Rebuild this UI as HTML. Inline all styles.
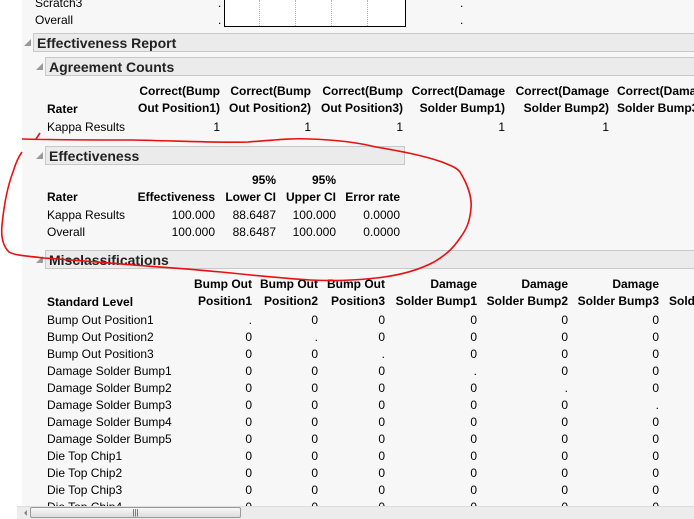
<!DOCTYPE html><html><head><style>
body{margin:0;width:694px;height:518px;overflow:hidden;background:#fff;font-family:"Liberation Sans",Arial,sans-serif;font-size:12px;color:#000;position:relative}
#bg{position:absolute;left:22px;top:0;width:672px;height:518px;background:#f7f7f7}
.a{position:absolute;white-space:nowrap;line-height:14px}
.h2{line-height:17px}
.b{font-weight:bold}
.r{text-align:right}
.hd{position:absolute;height:19px;background:#ebebeb;border:1px solid #c8c8c8;font-weight:bold;font-size:14px;line-height:19px;padding-left:3px;box-sizing:border-box;color:#222}
.tri{position:absolute;width:0;height:0;border-left:7px solid transparent;border-bottom:7px solid #999}
.c1,.c2,.c3,.c4,.c5,.c6{position:absolute;text-align:right;white-space:nowrap;line-height:14px}
.hr .c1,.hr .c2,.hr .c3,.hr .c4,.hr .c5,.hr .c6{line-height:17px}
.c1{right:442px}.c2{right:376px}.c3{right:309px}.c4{right:217px}.c5{right:126px}.c6{right:35px}
.row{position:absolute;left:0;width:694px;height:17px}
.row .l{position:absolute;left:47px;line-height:14px}
</style></head><body>
<div id="bg"></div>
<div class="a" style="left:35px;top:-4px">Scratch3</div>
<div class="a" style="left:35px;top:13px">Overall</div>
<div class="a" style="left:218px;top:-4px">.</div><div class="a" style="left:218px;top:13px">.</div>
<div class="a" style="left:460px;top:-4px">.</div><div class="a" style="left:460px;top:13px">.</div>
<div style="position:absolute;left:224px;top:-1px;width:180px;height:27px;border:1px solid #000;border-top:none;background:#fff"></div>
<div style="position:absolute;left:259px;top:0;height:26px;border-left:1px dotted #e0a0b0"></div>
<div style="position:absolute;left:295px;top:0;height:26px;border-left:1px dotted #e0a0b0"></div>
<div style="position:absolute;left:331px;top:0;height:26px;border-left:1px dotted #e0a0b0"></div>
<div style="position:absolute;left:367px;top:0;height:26px;border-left:1px dotted #e0a0b0"></div>

<div class="tri" style="left:24px;top:39px"></div>
<div class="hd" style="left:33px;top:33px;width:670px">Effectiveness Report</div>
<div class="tri" style="left:36px;top:63px"></div>
<div class="hd" style="left:45px;top:57px;width:660px">Agreement Counts</div>

<div class="a b" style="left:47px;top:102px">Rater</div>
<div class="a b r h2" style="right:474px;top:83px">Correct(Bump<br>Out Position1)</div>
<div class="a b r h2" style="right:383px;top:83px">Correct(Bump<br>Out Position2)</div>
<div class="a b r h2" style="right:291px;top:83px">Correct(Bump<br>Out Position3)</div>
<div class="a b r h2" style="right:189px;top:83px">Correct(Damage<br>Solder Bump1)</div>
<div class="a b r h2" style="right:85px;top:83px">Correct(Damage<br>Solder Bump2)</div>
<div class="a b h2" style="left:617px;top:83px">Correct(Damage<br>Solder Bump3)</div>
<div class="a" style="left:47px;top:120px">Kappa Results</div>
<div class="a r" style="right:474px;top:120px">1</div>
<div class="a r" style="right:383px;top:120px">1</div>
<div class="a r" style="right:291px;top:120px">1</div>
<div class="a r" style="right:189px;top:120px">1</div>
<div class="a r" style="right:85px;top:120px">1</div>

<div class="tri" style="left:36px;top:152px"></div>
<div class="hd" style="left:45px;top:146px;width:360px">Effectiveness</div>
<div class="a b r" style="right:418px;top:173px">95%</div>
<div class="a b r" style="right:358px;top:173px">95%</div>
<div class="a b" style="left:47px;top:190px">Rater</div>
<div class="a b r" style="right:479px;top:190px">Effectiveness</div>
<div class="a b r" style="right:418px;top:190px">Lower CI</div>
<div class="a b r" style="right:358px;top:190px">Upper CI</div>
<div class="a b r" style="right:294px;top:190px">Error rate</div>
<div class="a" style="left:47px;top:208px">Kappa Results</div>
<div class="a r" style="right:479px;top:208px">100.000</div>
<div class="a r" style="right:418px;top:208px">88.6487</div>
<div class="a r" style="right:358px;top:208px">100.000</div>
<div class="a r" style="right:294px;top:208px">0.0000</div>
<div class="a" style="left:47px;top:225px">Overall</div>
<div class="a r" style="right:479px;top:225px">100.000</div>
<div class="a r" style="right:418px;top:225px">88.6487</div>
<div class="a r" style="right:358px;top:225px">100.000</div>
<div class="a r" style="right:294px;top:225px">0.0000</div>

<div class="tri" style="left:36px;top:256px"></div>
<div class="hd" style="left:45px;top:250px;width:660px">Misclassifications</div>
<div class="a b" style="left:47px;top:295px">Standard Level</div>
<div class="a b hr" style="top:276px;left:0;width:694px;height:34px">
<span class="c1">Bump Out<br>Position1</span><span class="c2">Bump Out<br>Position2</span><span class="c3">Bump Out<br>Position3</span><span class="c4">Damage<br>Solder Bump1</span><span class="c5">Damage<br>Solder Bump2</span><span class="c6">Damage<br>Solder Bump3</span><span style="position:absolute;left:669px;top:17px;line-height:17px">Solder</span></div>

<div class="row" style="top:313px"><span class="l">Bump Out Position1</span><span class="c1">.</span><span class="c2">0</span><span class="c3">0</span><span class="c4">0</span><span class="c5">0</span><span class="c6">0</span></div>
<div class="row" style="top:330px"><span class="l">Bump Out Position2</span><span class="c1">0</span><span class="c2">.</span><span class="c3">0</span><span class="c4">0</span><span class="c5">0</span><span class="c6">0</span></div>
<div class="row" style="top:347px"><span class="l">Bump Out Position3</span><span class="c1">0</span><span class="c2">0</span><span class="c3">.</span><span class="c4">0</span><span class="c5">0</span><span class="c6">0</span></div>
<div class="row" style="top:364px"><span class="l">Damage Solder Bump1</span><span class="c1">0</span><span class="c2">0</span><span class="c3">0</span><span class="c4">.</span><span class="c5">0</span><span class="c6">0</span></div>
<div class="row" style="top:381px"><span class="l">Damage Solder Bump2</span><span class="c1">0</span><span class="c2">0</span><span class="c3">0</span><span class="c4">0</span><span class="c5">.</span><span class="c6">0</span></div>
<div class="row" style="top:398px"><span class="l">Damage Solder Bump3</span><span class="c1">0</span><span class="c2">0</span><span class="c3">0</span><span class="c4">0</span><span class="c5">0</span><span class="c6">.</span></div>
<div class="row" style="top:415px"><span class="l">Damage Solder Bump4</span><span class="c1">0</span><span class="c2">0</span><span class="c3">0</span><span class="c4">0</span><span class="c5">0</span><span class="c6">0</span></div>
<div class="row" style="top:432px"><span class="l">Damage Solder Bump5</span><span class="c1">0</span><span class="c2">0</span><span class="c3">0</span><span class="c4">0</span><span class="c5">0</span><span class="c6">0</span></div>
<div class="row" style="top:449px"><span class="l">Die Top Chip1</span><span class="c1">0</span><span class="c2">0</span><span class="c3">0</span><span class="c4">0</span><span class="c5">0</span><span class="c6">0</span></div>
<div class="row" style="top:466px"><span class="l">Die Top Chip2</span><span class="c1">0</span><span class="c2">0</span><span class="c3">0</span><span class="c4">0</span><span class="c5">0</span><span class="c6">0</span></div>
<div class="row" style="top:483px"><span class="l">Die Top Chip3</span><span class="c1">0</span><span class="c2">0</span><span class="c3">0</span><span class="c4">0</span><span class="c5">0</span><span class="c6">0</span></div>
<div class="row" style="top:500px"><span class="l">Die Top Chip4</span><span class="c1">0</span><span class="c2">0</span><span class="c3">0</span><span class="c4">0</span><span class="c5">0</span><span class="c6">0</span></div>

<div style="position:absolute;left:17px;top:506px;width:677px;height:12px;background:#ececec;border-top:1px solid #ddd"></div>
<div style="position:absolute;left:24px;top:510px;width:0;height:0;border-top:3px solid transparent;border-bottom:3px solid transparent;border-right:3px solid #888"></div>
<div style="position:absolute;left:30px;top:507px;width:211px;height:11px;background:linear-gradient(#f8f8f8,#dcdcdc);border:1px solid #999;border-radius:2px;box-sizing:border-box;text-align:center;font-size:8px;line-height:10px;color:#444">|||</div>

<svg style="position:absolute;left:0;top:0" width="694" height="518">
<path d="M40,133 L36,139 M22,139 C60,140 100,140 133,140 C180,141 220,143 248,142 C275,140 290,138 310,139 C340,140 360,143 376,147 C405,152 425,156 442,162 C452,166 457,168 460,172 C468,185 472,198 471,208 C470,222 466,230 460,238 C452,250 444,256 434,262 C415,272 395,276 376,278 C350,281 330,281 310,280 C280,278 250,275 221,272 C190,269 160,267 133,265 C100,262 70,260 44,258 C25,256 14,255 9,252 C2,245 1,235 2,225 C4,205 8,185 13,172 C16,162 19,156 22,152" fill="none" stroke="#e81010" stroke-width="1.6"/>
</svg>
</body></html>
